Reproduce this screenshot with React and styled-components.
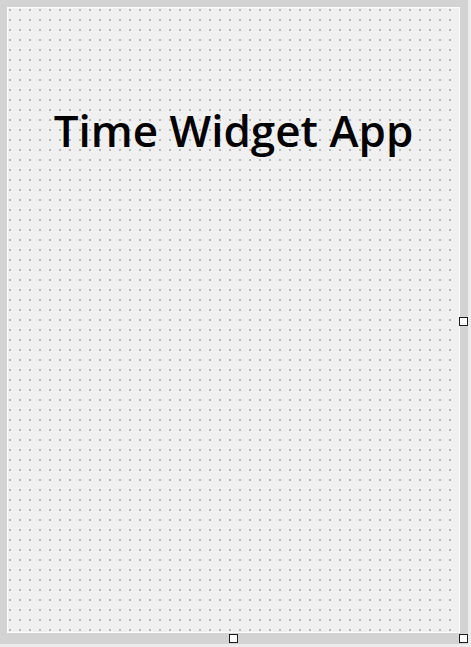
import React from 'react';
import styled, { createGlobalStyle } from 'styled-components';

const GlobalStyle = createGlobalStyle`
  html, body {
    margin: 0;
    padding: 0;
    background: #ececec;
  }
  #root {
    width: 471px;
    height: 647px;
  }
`;

const Surface = styled.div`
  position: relative;
  box-sizing: border-box;
  width: 468px;
  height: 644px;
  padding: 7px 8px 11px 7px;
  background: #d3d3d3;
`;

// the designer form with its grid of dots
const Form = styled.div`
  box-sizing: border-box;
  width: 453px;
  height: 626px;
  border: 1px solid #fbfbfb;
  background-color: #f0f0f0;
  background-image: radial-gradient(circle at 1px 1px, #b9b9b9 0.8px, transparent 1.2px);
  background-size: 10px 10px;
  background-position: 1px 1px;
  display: flex;
  flex-direction: column;
  align-items: center;
`;

const Title = styled.h1`
  margin: 94px 0 0;
  font-family: "Open Sans", "Noto Sans", sans-serif;
  font-weight: 600;
  font-size: 44px;
  line-height: 56px;
  color: #000;
`;

const Handle = styled.div`
  position: absolute;
  box-sizing: border-box;
  width: 9px;
  height: 9px;
  background: #fff;
  border: 1px solid #1e1e1e;
  left: ${p => p.$x}px;
  top: ${p => p.$y}px;
`;

export default function App() {
  return (
    <>
      <GlobalStyle />
      <Surface>
        <Form>
          <Title>Time Widget App</Title>
        </Form>
        <Handle $x={459} $y={317} />
        <Handle $x={229} $y={634} />
        <Handle $x={459} $y={634} />
      </Surface>
    </>
  );
}
